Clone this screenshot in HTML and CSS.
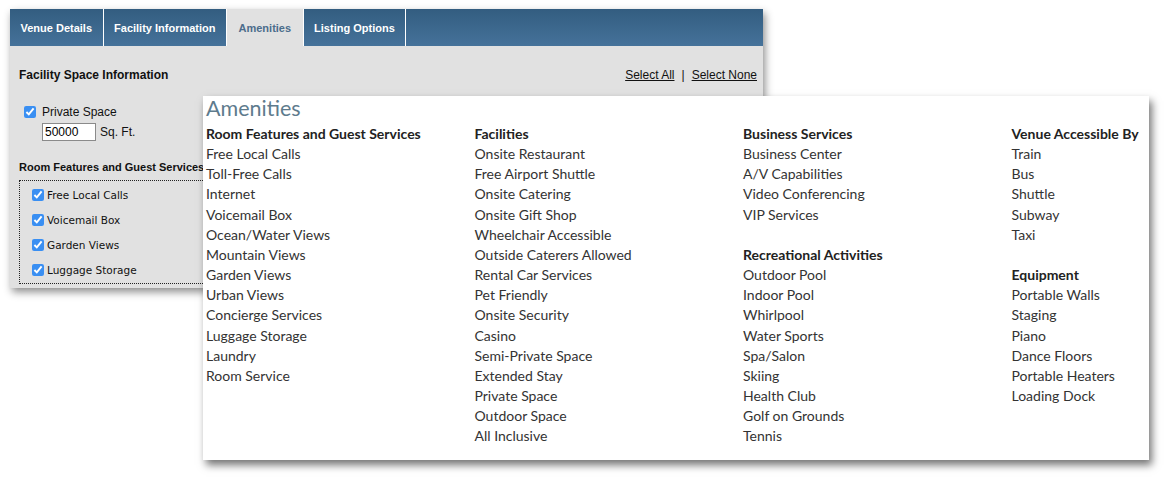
FILE: index.html
```html
<!DOCTYPE html>
<html lang="en">
<head>
<meta charset="utf-8">
<title>Amenities</title>
<link rel="stylesheet" href="styles.css">
</head>
<body>
<div class="editor">
  <nav class="tabs">
    <a class="tab">Venue Details</a>
    <a class="tab">Facility Information</a>
    <a class="tab active">Amenities</a>
    <a class="tab">Listing Options</a>
  </nav>
  <div class="editor-body">
    <div class="section-head">
      <h3>Facility Space Information</h3>
      <div class="select-links"><a href="#">Select All</a><span class="sep">|</span><a href="#">Select None</a></div>
    </div>
    <label class="space-check"><input type="checkbox" checked> Private Space</label>
    <div class="sqft"><input type="text" class="sqft-input" value="50000"> Sq. Ft.</div>
    <h4>Room Features and Guest Services</h4>
    <fieldset class="feature-box">
      <label class="feature"><input type="checkbox" checked>Free Local Calls</label>
      <label class="feature"><input type="checkbox" checked>Voicemail Box</label>
      <label class="feature"><input type="checkbox" checked>Garden Views</label>
      <label class="feature"><input type="checkbox" checked>Luggage Storage</label>
    </fieldset>
  </div>
</div>

<section class="amenities">
  <h2 class="amen-title">Amenities</h2>
  <div class="amen-grid">
    <div class="amen-col">
      <div class="group">
        <h5>Room Features and Guest Services</h5>
        <ul>
          <li>Free Local Calls</li><li>Toll-Free Calls</li><li>Internet</li><li>Voicemail Box</li>
          <li>Ocean/Water Views</li><li>Mountain Views</li><li>Garden Views</li><li>Urban Views</li>
          <li>Concierge Services</li><li>Luggage Storage</li><li>Laundry</li><li>Room Service</li>
        </ul>
      </div>
    </div>
    <div class="amen-col">
      <div class="group">
        <h5>Facilities</h5>
        <ul>
          <li>Onsite Restaurant</li><li>Free Airport Shuttle</li><li>Onsite Catering</li><li>Onsite Gift Shop</li>
          <li>Wheelchair Accessible</li><li>Outside Caterers Allowed</li><li>Rental Car Services</li><li>Pet Friendly</li>
          <li>Onsite Security</li><li>Casino</li><li>Semi-Private Space</li><li>Extended Stay</li>
          <li>Private Space</li><li>Outdoor Space</li><li>All Inclusive</li>
        </ul>
      </div>
    </div>
    <div class="amen-col">
      <div class="group">
        <h5>Business Services</h5>
        <ul>
          <li>Business Center</li><li>A/V Capabilities</li><li>Video Conferencing</li><li>VIP Services</li>
        </ul>
      </div>
      <div class="group">
        <h5>Recreational Activities</h5>
        <ul>
          <li>Outdoor Pool</li><li>Indoor Pool</li><li>Whirlpool</li><li>Water Sports</li><li>Spa/Salon</li>
          <li>Skiing</li><li>Health Club</li><li>Golf on Grounds</li><li>Tennis</li>
        </ul>
      </div>
    </div>
    <div class="amen-col">
      <div class="group">
        <h5>Venue Accessible By</h5>
        <ul>
          <li>Train</li><li>Bus</li><li>Shuttle</li><li>Subway</li><li>Taxi</li>
        </ul>
      </div>
      <div class="group">
        <h5>Equipment</h5>
        <ul>
          <li>Portable Walls</li><li>Staging</li><li>Piano</li><li>Dance Floors</li>
          <li>Portable Heaters</li><li>Loading Dock</li>
        </ul>
      </div>
    </div>
  </div>
</section>
</body>
</html>
```

FILE: styles.css
```css
html, body {
  margin: 0;
  padding: 0;
  background: #ffffff;
}

body {
  position: relative;
  width: 1165px;
  height: 477px;
  overflow: hidden;
  font-family: "Liberation Sans", Arial, sans-serif;
}

/* ---------- back panel ---------- */
.editor {
  margin: 9px 0 0 10px;
  width: 753px;
  height: 279px;
  background: #e1e1e1;
  box-shadow: 2px 4px 8px rgba(0, 0, 0, 0.45);
  display: flex;
  flex-direction: column;
}

.tabs {
  display: flex;
  height: 37px;
  background: linear-gradient(#335d80, #45729a);
}

.tab {
  display: flex;
  align-items: center;
  padding: 0 10.5px;
  font-size: 11px;
  font-weight: bold;
  color: #ffffff;
  border-right: 1px solid #ffffff;
}

.tab.active {
  background: #e1e1e1;
  color: #4c6d8c;
  padding: 0 11.5px;
}

.editor-body {
  padding: 22px 6px 0 9px;
  font-size: 12px;
  color: #111;
}

.section-head {
  display: flex;
  justify-content: space-between;
  align-items: center;
  height: 14px;
}

.section-head h3 {
  margin: 0;
  font-size: 12px;
  font-weight: bold;
}

.select-links a {
  color: #111;
  text-decoration: underline;
}

.select-links .sep {
  margin: 0 7px;
}

.space-check {
  display: flex;
  align-items: center;
  margin: 23px 0 0 5px;
  height: 14px;
}

.space-check input,
.feature input {
  width: 12px;
  height: 12px;
  margin: 0 6px 0 0;
  accent-color: #3a8ff2;
}

.sqft {
  display: flex;
  align-items: center;
  gap: 4px;
  margin: 4px 0 0 23px;
  height: 18px;
}

.sqft-input {
  box-sizing: border-box;
  width: 54px;
  height: 18px;
  padding: 0 2px;
  border: 1px solid #8a8a8a;
  font-family: "Liberation Sans", Arial, sans-serif;
  font-size: 12px;
  color: #000;
}

.editor-body h4 {
  margin: 19px 0 0;
  height: 14px;
  font-size: 11px;
  font-weight: bold;
  line-height: 14px;
}

.feature-box {
  margin: 6px 0 0;
  padding: 1.5px 12px 0;
  border: 1px dotted #222;
  display: flex;
  flex-direction: column;
}

.feature {
  display: flex;
  align-items: center;
  height: 25px;
  font-family: "DejaVu Sans", Verdana, sans-serif;
  font-size: 10.5px;
  color: #111;
}

.feature input { margin-right: 3px; }

/* ---------- front panel (overlay) ---------- */
.amenities {
  position: absolute;
  left: 203px;
  top: 96px;
  width: 946px;
  height: 364px;
  box-sizing: border-box;
  padding: 0 0 0 3px;
  background: #ffffff;
  box-shadow: 3px 5px 8px rgba(0, 0, 0, 0.55);
  font-family: Lato, "Open Sans", sans-serif;
}

.amen-title {
  margin: 0 0 3px;
  font-size: 21.5px;
  font-weight: normal;
  line-height: 25px;
  color: #5e7b8d;
}

.amen-grid {
  display: grid;
  grid-template-columns: 268.5px 268.5px 268.5px 1fr;
}

.group {
  margin-bottom: 20.15px;
}

.group h5 {
  margin: 0;
  font-size: 14px;
  font-weight: bold;
  line-height: 20.15px;
  color: #222;
}

.group ul {
  margin: 0;
  padding: 0;
  list-style: none;
}

.group li {
  font-size: 14px;
  line-height: 20.15px;
  color: #333;
}
```
